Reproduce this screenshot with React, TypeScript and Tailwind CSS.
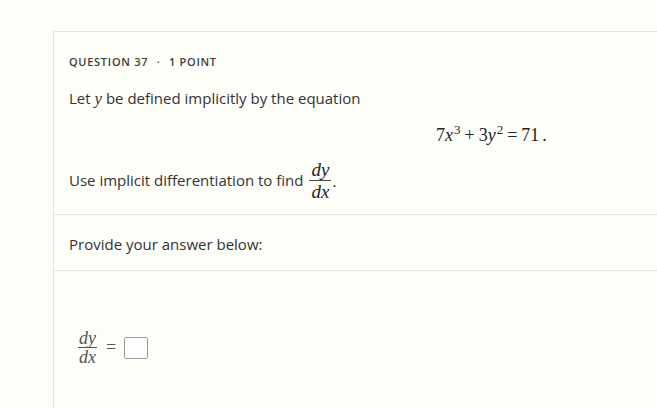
import React from "react";

const sans = { fontFamily: '"Open Sans", "Noto Sans", sans-serif' };
const serif = { fontFamily: '"Liberation Serif", "DejaVu Serif", serif' };

export default function App() {
  return (
    <div className="w-[657px] h-[408px] overflow-hidden bg-[#fefef8]" style={sans}>
      <div className="pt-[31px] pl-[53px]">
        <div className="w-[700px] h-[400px] border-t border-l border-[#e6e6df] bg-[#fefef8]">
          <div className="h-[183px] border-b border-[#e6e6df] pl-[15px] pt-[22px]">
            <div className="text-[11px] font-semibold tracking-[0.065em] text-[#3c3c3c] leading-[16px]">
              QUESTION 37 <span className="mx-[5px]">·</span> 1 POINT
            </div>
            <div className="mt-[18px] text-[15px] text-[#333] leading-[20px]">
              Let <span className="italic text-[17px]" style={serif}>y</span> be defined implicitly by the equation
            </div>
            <div className="mt-[16px] ml-[367px] flex items-baseline text-[18px] text-[#222] leading-[20px]" style={serif}>
              <span>7</span>
              <i>x</i>
              <span className="text-[13px] relative top-[-7px] ml-[1px]">3</span>
              <span className="mx-[4px]">+</span>
              <span>3</span>
              <i>y</i>
              <span className="text-[13px] relative top-[-7px] ml-[1px]">2</span>
              <span className="mx-[4px]">=</span>
              <span>71</span>
              <span className="ml-[3px]">.</span>
            </div>
            <div className="mt-[13px] flex items-center text-[15px] text-[#333]">
              <span>Use implicit differentiation to find</span>
              <span
                className="ml-[6px] inline-flex flex-col items-center text-[19px] italic text-[#222] leading-[19px]"
                style={serif}
              >
                <span className="px-[2px]">dy</span>
                <span className="w-full h-px bg-[#444] my-[1px]" />
                <span className="px-[2px]">dx</span>
              </span>
              <span className="ml-[1px] mt-[2px] text-[#222]">.</span>
            </div>
          </div>
          <div className="h-[56px] border-b border-[#e6e6df] pl-[15px] pt-[4px] flex items-center">
            <span className="text-[15px] text-[#333]">Provide your answer below:</span>
          </div>
          <div className="pl-[24px] pt-[59px] flex items-center">
            <span
              className="inline-flex flex-col items-center text-[18px] italic text-[#555] leading-[16px]"
              style={serif}
            >
              <span className="px-[1px]">dy</span>
              <span className="w-full h-px bg-[#555] my-[1px]" />
              <span className="px-[1px]">dx</span>
            </span>
            <span className="ml-[9px] text-[18px] text-[#555]" style={serif}>=</span>
            <span className="ml-[8px] w-[24px] h-[22px] border border-[#999] rounded-[2px] bg-white" />
          </div>
        </div>
      </div>
    </div>
  );
}
